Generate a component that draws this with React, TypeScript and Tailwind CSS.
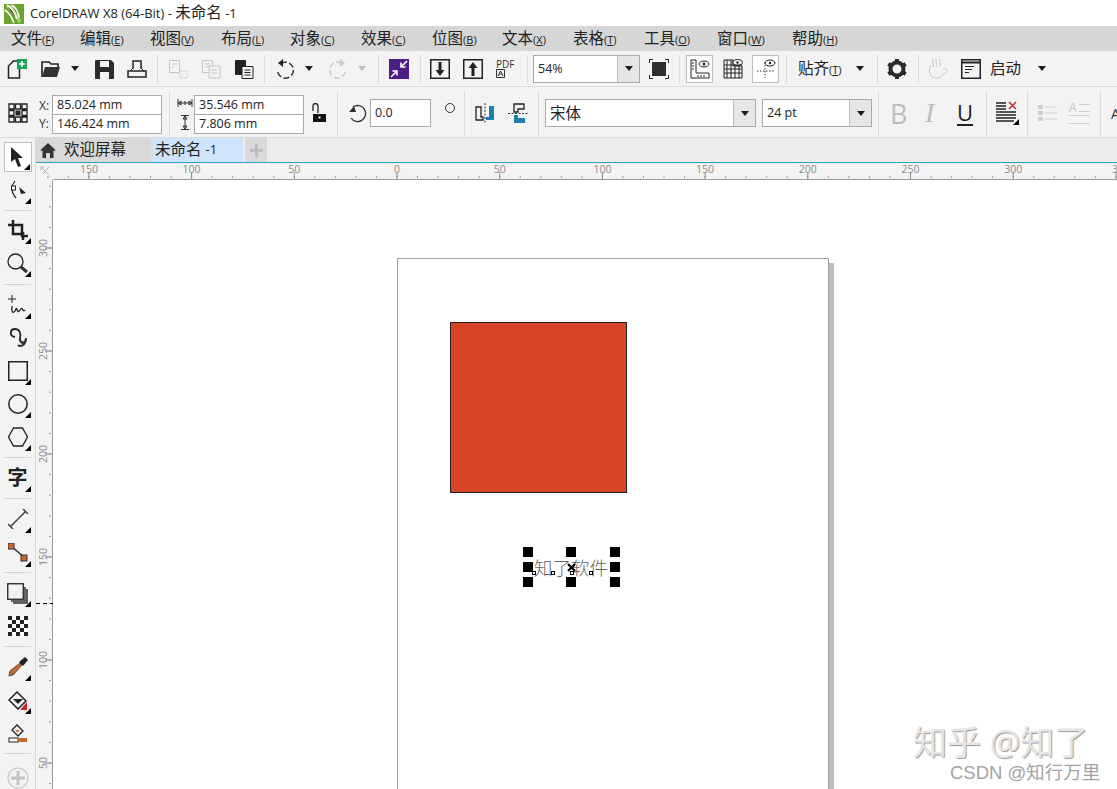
import type { ReactNode } from 'react'

const CJK = 'font-["Open_Sans","Noto_Sans_CJK_SC",sans-serif]'

function Sep({ className }: { className: string }) {
  return <div className={`w-px shrink-0 bg-[#dcdcdc] ${className}`} />
}

function Arrow({ className, gray }: { className: string; gray?: boolean }) {
  return (
    <svg viewBox="0 0 8 5" className={`h-[5px] w-[8px] shrink-0 ${className}`}>
      <path d="M0 0h8L4 5z" fill={gray ? '#bdbdbd' : '#1c1c1c'} />
    </svg>
  )
}

function Icon({ className = '', w = 20, h = 20, children }: { className?: string; w?: number; h?: number; children: ReactNode }) {
  return (
    <svg width={w} height={h} viewBox={`0 0 ${w} ${h}`} fill="none" className={`shrink-0 ${className}`}>
      {children}
    </svg>
  )
}

function Combo({ className, text, textClass }: { className: string; text: string; textClass: string }) {
  return (
    <div className={`flex h-[28px] shrink-0 border border-[#a9a9a9] bg-white ${className}`}>
      <div className={`flex-1 pl-[4px] leading-[26px] text-[#222] ${textClass}`}>{text}</div>
      <div className="flex w-[22px] items-center justify-center border-l border-[#bdbdbd] bg-[#e6e6e6]">
        <Arrow className="" />
      </div>
    </div>
  )
}

function Tool({ className, corner = true, children }: { className: string; corner?: boolean; children: ReactNode }) {
  return (
    <div className={`relative mx-auto flex h-[30px] w-[28px] shrink-0 items-center justify-center ${className}`}>
      {children}
      {corner && (
        <svg viewBox="0 0 6 6" className="absolute bottom-[1px] right-[1px] h-[6px] w-[6px]">
          <path d="M6 0v6H0z" fill="#000" />
        </svg>
      )}
    </div>
  )
}

function ToolSep({ className }: { className: string }) {
  return <div className={`mx-[4px] h-px shrink-0 bg-[#d4d4d4] ${className}`} />
}

const menus: [string, string, string][] = [
  ['文件', 'F', 'w-[80px] pl-[11px]'],
  ['编辑', 'E', 'w-[70px]'],
  ['视图', 'V', 'w-[71px]'],
  ['布局', 'L', 'w-[69px]'],
  ['对象', 'C', 'w-[71px]'],
  ['效果', 'C', 'w-[71px]'],
  ['位图', 'B', 'w-[70px]'],
  ['文本', 'X', 'w-[71px]'],
  ['表格', 'T', 'w-[71px]'],
  ['工具', 'O', 'w-[73px]'],
  ['窗口', 'W', 'w-[75px]'],
  ['帮助', 'H', 'w-[60px]'],
]

function HRuler() {
  const px = (i: number) => 397 - 36 + i * 20.54
  const labels = [
    [-15, '150'], [-10, '100'], [-5, '50'], [0, '0'], [5, '50'], [10, '100'], [15, '150'], [20, '200'], [25, '250'], [30, '300'], [35, '35'],
  ] as [number, string][]
  const dots = Array.from({ length: 60 }, (_, i) => i - 18)
  return (
    <svg width={1081} height={17} className="block shrink-0">
      <path d="M17 16.5H1081" stroke="#9c9c9c" />
      <path d="M5 4l8 8M5 4h3M5 4v3M13 4l-6 7" stroke="#b0b0b0" />
      {dots.map((i) => (
        <path key={i} d={`M${px(i)} 13v2`} stroke="#9a9a9a" />
      ))}
      {labels.map(([i, t]) => (
        <g key={t + i}>
          <path d={`M${px(i)} 9v7`} stroke="#8a8a8a" />
          <text x={px(i) + (t === '35' ? 2 : 0)} y={10} textAnchor="middle" fontSize="10.5" fill="#8c8c8c" fontFamily="Open Sans, sans-serif">{t}</text>
        </g>
      ))}
    </svg>
  )
}

function VRuler() {
  const py = (i: number) => 248 - 180 + i * 20.6
  const labels = [[0, '300'], [5, '250'], [10, '200'], [15, '150'], [20, '100'], [25, '50']] as [number, string][]
  const dots = Array.from({ length: 32 }, (_, i) => i - 3)
  return (
    <svg width={17} height={609} className="block shrink-0">
      <path d="M16.5 0V609" stroke="#9c9c9c" />
      {dots.map((i) => (
        <path key={i} d={`M13 ${py(i)}h2`} stroke="#9a9a9a" />
      ))}
      {labels.map(([i, t]) => (
        <g key={t}>
          <path d={`M9 ${py(i)}h7`} stroke="#8a8a8a" />
          <text transform={`translate(11 ${py(i)}) rotate(-90)`} textAnchor="middle" fontSize="10.5" fill="#8c8c8c" fontFamily="Open Sans, sans-serif">{t}</text>
        </g>
      ))}
      <path d="M0 423.5H17" stroke="#000" strokeDasharray="4 3" />
    </svg>
  )
}

function Handle({ className }: { className: string }) {
  return <div className={`absolute h-[10px] w-[10px] bg-black ${className}`} />
}

function Node({ className }: { className: string }) {
  return <div className={`absolute h-[4px] w-[4px] border border-black bg-white ${className}`} />
}

export default function App() {
  return (
    <div className={`flex h-[789px] w-[1117px] flex-col overflow-hidden bg-white ${CJK}`}>
      {/* title bar */}
      <div className="flex h-[26px] shrink-0 items-center bg-white">
        <svg width="20" height="20" viewBox="0 0 20 20" className="ml-[4px] mt-[1px]">
          <rect width="20" height="20" fill="#6aa52d" />
          <path d="M1 3c5 1 9 6 12 13l1 3 3-1c-1-8-6-14-10-17z" fill="#a9cf6a" />
          <path d="M3 1c5 3 8 8 10 14M8 1c4 3 6 7 7 12M1 6c4 3 7 8 9 13" stroke="#fff" strokeWidth="1.6" />
        </svg>
        <span className="ml-[6px] whitespace-nowrap text-[13px] text-[#222]">
          CorelDRAW X8 (64-Bit) - <span className="text-[15.5px]">未命名</span> -1
        </span>
      </div>

      {/* menu bar */}
      <div className="flex h-[25px] shrink-0 items-center bg-[#d6d6d6] text-[#222]">
        {menus.map(([label, key, w]) => (
          <div key={label} className={`shrink-0 whitespace-nowrap text-[15.5px] leading-[25px] ${w}`}>
            {label}
            <span className="text-[11px]">(<span className="underline">{key}</span>)</span>
          </div>
        ))}
      </div>

      {/* standard toolbar */}
      <div className="flex h-[36px] shrink-0 items-center border-b border-[#dcdcdc] bg-[#f3f3f3]">
        <Icon className="ml-[7px]" w={21}>
          <path d="M1.5 19V7l5-5h6v17z" stroke="#222" strokeWidth="1.5" />
          <rect x="10" y="0" width="10" height="10" fill="#1fa05a" />
          <path d="M15 2v6M12 5h6" stroke="#fff" strokeWidth="1.6" />
        </Icon>
        <Icon className="ml-[13px]">
          <path d="M1 18V3h7l2 2h7v3" stroke="#222" strokeWidth="1.6" />
          <path d="M1 18l3-10h15l-3 10z" fill="#333" />
        </Icon>
        <Arrow className="ml-[10px]" />
        <Icon className="ml-[15px]" w={21}>
          <path d="M1 2a1 1 0 0 1 1-1h15l3 3v15a1 1 0 0 1-1 1H2a1 1 0 0 1-1-1z" fill="#2b2b2b" />
          <rect x="6" y="2" width="9" height="6" fill="#f3f3f3" />
          <rect x="6" y="13" width="9" height="7" fill="#f3f3f3" />
        </Icon>
        <Icon className="ml-[12px]">
          <path d="M6 10V2h8v8M1 12h18v6H1z" stroke="#222" strokeWidth="1.5" />
          <path d="M3 12l3-3M17 12l-3-3" stroke="#222" />
        </Icon>
        <Sep className="ml-[10px] h-[28px]" />
        <Icon className="ml-[10px]">
          <path d="M1.5 1.5h10v12h-10zM4 5h5M4 8h2" stroke="#c4c4c4" />
          <path d="M12 12h7v7h-7z" stroke="#c4c4c4" strokeDasharray="2 1" />
        </Icon>
        <Icon className="ml-[13px]">
          <path d="M1.5 1.5h10v12h-10zM4 5h5M4 8h5" stroke="#c4c4c4" />
          <path d="M8 7h11v12H8zM10.5 11h6M10.5 14h6" stroke="#c4c4c4" fill="#f3f3f3" />
        </Icon>
        <Icon className="ml-[13px]">
          <rect x="1" y="1" width="11" height="15" rx="1" fill="#222" />
          <path d="M8 7.5h11v12H8z" fill="#f3f3f3" stroke="#222" />
          <path d="M10.5 11h6M10.5 13.5h6M10.5 16h6" stroke="#222" />
        </Icon>
        <Sep className="ml-[10px] h-[28px]" />
        <Icon className="ml-[10px]">
          <path d="M6 4.5a8 8 0 1 1-3.5 8" stroke="#333" strokeWidth="1.5" strokeDasharray="6 2.5" />
          <path d="M8 0v8L3 4z" fill="#222" />
        </Icon>
        <Arrow className="ml-[10px]" />
        <Icon className="ml-[15px]">
          <path d="M14 4.5a8 8 0 1 0 3.5 8" stroke="#c8c8c8" strokeWidth="1.5" strokeDasharray="6 2.5" />
          <path d="M12 0v8l5-4z" fill="#c8c8c8" />
        </Icon>
        <Arrow gray className="ml-[10px]" />
        <Sep className="ml-[12px] h-[28px]" />
        <Icon className="ml-[10px]">
          <rect width="20" height="20" fill="#4b1d85" />
          <path d="M18 2l-6 6M12 3.5V8h4.5M2 18l6-6M3.5 12H8v4.5" stroke="#fff" strokeWidth="1.6" />
        </Icon>
        <Sep className="ml-[11px] h-[28px]" />
        <Icon className="ml-[9px]">
          <rect x=".75" y=".75" width="18.5" height="18.5" stroke="#222" strokeWidth="1.5" />
          <path d="M10 3v9" stroke="#222" strokeWidth="3" />
          <path d="M5.5 11h9L10 17z" fill="#222" />
        </Icon>
        <Icon className="ml-[13px]">
          <rect x=".75" y=".75" width="18.5" height="18.5" stroke="#222" strokeWidth="1.5" />
          <path d="M10 17V8" stroke="#222" strokeWidth="3" />
          <path d="M5.5 9h9L10 3z" fill="#222" />
        </Icon>
        <div className="ml-[13px] flex w-[20px] shrink-0 flex-col text-[10px] leading-[10px] text-[#333]">
          <span>PDF</span>
          <svg width="9" height="9" viewBox="0 0 9 9"><path d="M.5.5h8v8h-8zM2 7l2.5-5L7 7M3 5h3" stroke="#333" fill="none" /></svg>
        </div>
        <Sep className="ml-[11px] h-[28px]" />
        <Combo className="ml-[5px] w-[107px]" text="54%" textClass="text-[12.5px]" />
        <Icon className="ml-[9px]">
          <rect x="3" y="3" width="14" height="14" fill="#2d2d2d" />
          <path d="M.5 4V.5H4M16 .5h3.5V4M19.5 16v3.5H16M4 19.5H.5V16" stroke="#222" />
        </Icon>
        <Sep className="ml-[10px] h-[28px]" />
        <div className="ml-[6px] flex h-[28px] w-[27px] shrink-0 items-center justify-center border border-[#bdbdbd] bg-white">
          <Icon>
            <path d="M1 1h5v13h13v5H1zM2 4h2M2 7h2M2 10h2M8 16v2M11 16v2M14 16v2" stroke="#222" />
            <ellipse cx="14" cy="5" rx="5" ry="3" stroke="#222" />
            <circle cx="14" cy="5" r="1.5" fill="#222" />
          </Icon>
        </div>
        <Icon className="ml-[10px]">
          <path d="M1 1h9v6h9v12H1zM1 6h18M1 10h18M1 14h18M4 1v18M8 1v18M12 7v12M16 7v12" stroke="#222" />
          <ellipse cx="14.500" cy="3.500" rx="5" ry="3" stroke="#222" />
          <circle cx="14.500" cy="3.500" r="1.200" fill="#222" />
        </Icon>
        <div className="ml-[9px] flex h-[28px] w-[27px] shrink-0 items-center justify-center border border-[#bdbdbd] bg-white">
          <Icon>
            <path d="M9 3v16M1 12h17" stroke="#333" strokeDasharray="1.500 1.500" />
            <ellipse cx="14" cy="4" rx="5" ry="3" stroke="#222" />
            <circle cx="14" cy="4" r="1.200" fill="#222" />
          </Icon>
        </div>
        <Sep className="ml-[7px] h-[28px]" />
        <span className="ml-[11px] w-[47px] shrink-0 whitespace-nowrap text-[15.5px] text-[#222]">
          贴齐<span className="text-[11px]">(<span className="underline">T</span>)</span>
        </span>
        <Arrow className="ml-[11px]" />
        <Sep className="ml-[13px] h-[28px]" />
        <Icon className="ml-[9px]">
          <path d="M10 3.500a6.500 6.500 0 1 0 0 13 6.500 6.500 0 0 0 0-13z" stroke="#2b2b2b" strokeWidth="4" />
          <path d="M10 0v4M10 16v4M1.300 5l3.500 2M15.200 13l3.500 2M1.300 15l3.500-2M15.200 7l3.500-2" stroke="#2b2b2b" strokeWidth="4" />
        </Icon>
        <Sep className="ml-[11px] h-[28px]" />
        <Icon className="ml-[9px]">
          <path d="M5 0c-2 3 2 5 0 8M8.500 0c-2 3 2 5 0 8M12 0c-2 3 2 5 0 8M3 6c-3 5-2 13 6 13 3 0 5-2 6-4M15 10c3-1 5 1 4 3s-3 2-4 2" stroke="#c8c8c8" />
        </Icon>
        <Icon className="ml-[13px]">
          <rect x=".75" y=".75" width="18.500" height="18.500" stroke="#222" strokeWidth="1.500" />
          <path d="M1 3.500h18" stroke="#222" strokeWidth="2" />
          <path d="M4 7.500h9M4 10.500h7M4 13.500h4" stroke="#222" />
        </Icon>
        <span className="ml-[9px] w-[32px] shrink-0 whitespace-nowrap text-[15.5px] text-[#222]">启动</span>
        <Arrow className="ml-[16px]" />
      </div>

      {/* property bar */}
      <div className="flex h-[51px] shrink-0 items-center border-b border-[#dcdcdc] bg-[#f3f3f3] pt-[2px]">
        <Icon className="ml-[8px]">
          <path d="M1 1h5v5H1zM7.500 1h5v5h-5zM14 1h5v5h-5zM1 7.500h5v5H1zM14 7.500h5v5h-5zM1 14h5v5H1zM7.500 14h5v5h-5zM14 14h5v5h-5z" stroke="#222" strokeWidth="1.300" />
          <rect x="7.500" y="7.500" width="5" height="5" fill="#222" />
        </Icon>
        <div className="ml-[11px] mt-[3px] flex w-[13px] shrink-0 flex-col text-[12px] leading-[18px] text-[#333]">
          <span>X:</span>
          <span>Y:</span>
        </div>
        <div className="mt-[3px] w-[110px] shrink-0 border border-[#a9a9a9] bg-white pl-[4px] text-[12.5px] leading-[18px] text-[#222]">
          <div className="-ml-[4px] border-b border-[#a9a9a9] pl-[4px]">85.024 mm</div>
          <div>146.424 mm</div>
        </div>
        <Sep className="ml-[7px] h-[45px]" />
        <div className="ml-[7px] mt-[3px] flex w-[16px] shrink-0 flex-col items-center gap-[7px]">
          <Icon w={16} h={9}>
            <path d="M1 0v8M15 0v8M1 4h14M1 4l3-2v4zM15 4l-3-2v4zM8 2v4" stroke="#333" />
          </Icon>
          <Icon w={10} h={15}>
            <path d="M1 .5h8M1 14.500h8M5 1v13M5 1L3 4h4zM5 14L3 11h4z" stroke="#333" />
          </Icon>
        </div>
        <div className="ml-[1px] mt-[3px] w-[110px] shrink-0 border border-[#a9a9a9] bg-white pl-[4px] text-[12.5px] leading-[18px] text-[#222]">
          <div className="-ml-[4px] border-b border-[#a9a9a9] pl-[4px]">35.546 mm</div>
          <div>7.806 mm</div>
        </div>
        <Icon className="ml-[8px]" w={14} h={20}>
          <path d="M1 8V3a2.500 2.500 0 0 1 5 0v7" stroke="#222" strokeWidth="1.300" />
          <rect x="1" y="11" width="13" height="8" fill="#111" />
          <rect x="6.500" y="13.500" width="2" height="2" fill="#fff" />
        </Icon>
        <Sep className="ml-[11px] h-[45px]" />
        <Icon className="ml-[10px]" w={19} h={20}>
          <path d="M5 4a8 8 0 1 1-2 11" stroke="#333" strokeWidth="1.300" />
          <path d="M1 9h7L6 3z" fill="#333" />
        </Icon>
        <div className="ml-[3px] h-[28px] w-[61px] shrink-0 border border-[#a9a9a9] bg-white pl-[4px] text-[12.5px] leading-[26px] text-[#222]">
          0.0
        </div>
        <div className="ml-[14px] -mt-[11px] h-[10px] w-[10px] shrink-0 rounded-full border border-[#333]" />
        <Sep className="ml-[9px] h-[45px]" />
        <Icon className="ml-[10px]">
          <path d="M1 4h5v10h2v3H1z" stroke="#222" strokeWidth="1.300" />
          <path d="M19 3h-5v11h-3v3h8z" fill="#1f7fb0" />
          <path d="M10 0v20" stroke="#333" strokeDasharray="2 1.500" />
        </Icon>
        <Icon className="ml-[13px]">
          <path d="M6 1h10v5h-6v3H6z" stroke="#222" strokeWidth="1.300" />
          <path d="M6 12h4v3h7v5H6z" fill="#1f7fb0" />
          <path d="M0 10.500h20" stroke="#333" strokeDasharray="2 1.500" />
        </Icon>
        <Sep className="ml-[10px] h-[45px]" />
        <Combo className="ml-[6px] w-[211px]" text="宋体" textClass="text-[15.5px]" />
        <Combo className="ml-[6px] w-[110px]" text="24 pt" textClass="text-[12.5px]" />
        <Sep className="ml-[6px] h-[45px]" />
        <span className="ml-[11px] w-[16px] shrink-0 text-[27px] leading-none text-[#bdbdbd]">B</span>
        <span className="ml-[19px] w-[15px] shrink-0 font-['Liberation_Serif',serif] text-[28px] italic leading-none text-[#bdbdbd]">I</span>
        <div className="ml-[17px] w-[16px] shrink-0 border-b-2 border-[#222] text-center text-[22px] leading-[23px] text-[#222]">U</div>
        <Sep className="ml-[13px] h-[45px]" />
        <Icon className="ml-[9px]" w={23} h={24}>
          <path d="M0 2h10M0 5h10M0 8h10M0 11h20M0 14h20M0 17h20M0 20h18" stroke="#222" strokeWidth="1.500" />
          <path d="M13 1l7 7M20 1l-7 7" stroke="#d12a2a" strokeWidth="1.500" />
          <path d="M23 18v6h-6z" fill="#000" />
        </Icon>
        <Sep className="ml-[8px] h-[45px]" />
        <Icon className="ml-[9px]">
          <path d="M1 2h5v4H1zM1 8h5v4H1zM1 14h5v4H1z" fill="#d0d0d0" />
          <path d="M8 4h12M8 10h12M8 16h12" stroke="#d0d0d0" />
        </Icon>
        <div className="ml-[12px] flex w-[21px] shrink-0 flex-col gap-[2px]">
          <div className="flex items-center gap-[2px] text-[12px] leading-[11px] text-[#c8c8c8]">
            A
            <div className="h-[8px] flex-1 border-y border-[#d0d0d0]" />
          </div>
          <div className="h-[9px] border-y border-[#d0d0d0]" />
        </div>
        <Sep className="ml-[10px] h-[45px]" />
        <span className="ml-[10px] text-[14px] text-[#333]">A</span>
      </div>

      {/* work area */}
      <div className="flex min-h-0 flex-1">
        <aside className="flex w-[36px] shrink-0 flex-col border-r border-[#d8d8d8] bg-[#f3f3f3]">
          <Tool className="mt-[4px] border border-[#bdbdbd] bg-white">
            <Icon w={15} h={22}>
              <path d="M1 1l12 11H8l3 8-3 1-3-8-4 3z" fill="#222" />
            </Icon>
          </Tool>
          <Tool className="mt-[3px]">
            <Icon>
              <path d="M7 1c-4 5-4 11 1 17" stroke="#222" strokeWidth="1.200" />
              <rect x="3.500" y="6" width="4" height="4" fill="#fff" stroke="#222" />
              <path d="M11 7l7 6-5 1z" fill="#222" />
            </Icon>
          </Tool>
          <ToolSep className="mt-[5px]" />
          <Tool className="mt-[4px]">
            <Icon>
              <path d="M0 5h14v11h6M5 0v5M5 5v9h11M15 12v8" stroke="#222" strokeWidth="2.500" />
            </Icon>
          </Tool>
          <Tool className="mt-[3px]">
            <Icon w={21} h={21}>
              <circle cx="8.500" cy="8.500" r="7.500" stroke="#222" strokeWidth="1.300" />
              <path d="M14 14l6 5" stroke="#333" strokeWidth="3" />
            </Icon>
          </Tool>
          <ToolSep className="mt-[6px]" />
          <Tool className="mt-[5px]">
            <Icon w={22} h={22}>
              <path d="M5 1v8M1 5h8" stroke="#222" />
              <path d="M5 12c-1 10 3 6 4 3s1 6 4 1 2 3 5 0" stroke="#222" strokeWidth="1.300" />
            </Icon>
          </Tool>
          <Tool className="mt-[3px]" corner={false}>
            <Icon>
              <path d="M7 9C1 8 2 1 7 1s6 5 5 9c-1 5 6 7 6 0" stroke="#222" strokeWidth="1.800" />
              <path d="M12 10c-1 5 6 8 6 1-1 7-6 8-8 6" stroke="#333" strokeWidth="2" />
            </Icon>
          </Tool>
          <Tool className="mt-[3px]">
            <Icon>
              <rect x=".75" y=".75" width="18.500" height="18.500" stroke="#222" strokeWidth="1.500" />
            </Icon>
          </Tool>
          <Tool className="mt-[3px]">
            <Icon>
              <circle cx="10" cy="10" r="9.200" stroke="#222" strokeWidth="1.500" />
            </Icon>
          </Tool>
          <Tool className="mt-[3px]">
            <Icon>
              <path d="M5.500 1h9l5 9-5 9h-9l-5-9z" stroke="#222" strokeWidth="1.300" />
            </Icon>
          </Tool>
          <ToolSep className="mt-[5px]" />
          <Tool className="mt-[5px] text-[20px] font-bold text-[#222]">字</Tool>
          <ToolSep className="mt-[5px]" />
          <Tool className="mt-[5px]">
            <Icon>
              <path d="M2 18L18 2M0 15l5 5M15 0l5 5" stroke="#333" strokeWidth="1.300" />
            </Icon>
          </Tool>
          <Tool className="mt-[4px]">
            <Icon>
              <path d="M3 3l14 12" stroke="#222" strokeWidth="1.300" />
              <rect x="0" y="0" width="6" height="6" fill="#c4692f" stroke="#333" />
              <rect x="13" y="12" width="6" height="6" fill="#c4692f" stroke="#333" />
            </Icon>
          </Tool>
          <ToolSep className="mt-[4px]" />
          <Tool className="mt-[5px]">
            <Icon w={21} h={21}>
              <rect x=".75" y=".75" width="15.500" height="15.500" stroke="#222" strokeWidth="1.300" />
              <path d="M18 4v14H4M20 6v14H6" stroke="#333" strokeWidth="1.500" />
            </Icon>
          </Tool>
          <Tool className="mt-[3px]" corner={false}>
            <Icon>
              <rect width="20" height="20" fill="#222" />
              <path d="M4 0h4v4H4zM12 0h4v4h-4zM0 4h4v4H0zM8 4h4v4H8zM16 4h4v4h-4zM4 8h4v4H4zM12 8h4v4h-4zM0 12h4v4H0zM8 12h4v4H8zM16 12h4v4h-4zM4 16h4v4H4zM12 16h4v4h-4z" fill="#fff" />
            </Icon>
          </Tool>
          <ToolSep className="mt-[5px]" />
          <Tool className="mt-[5px]">
            <Icon>
              <path d="M1 19l1-5L12 6l2 2L5 18z" fill="#c4692f" stroke="#333" strokeWidth=".8" />
              <path d="M11 5l6-5 3 3-5 6z" fill="#222" />
            </Icon>
          </Tool>
          <Tool className="mt-[3px]">
            <Icon>
              <path d="M1 10l8-8 9 9-8 8z" stroke="#222" strokeWidth="1.500" />
              <path d="M5 9h10l-5 5z" fill="#222" />
              <path d="M19 12v8h-7z" fill="#d0202a" />
            </Icon>
          </Tool>
          <Tool className="mt-[3px]" corner={false}>
            <Icon>
              <path d="M4 7l5-5 6 6-5 5z" stroke="#222" strokeWidth="1.300" />
              <path d="M7 7h5l-2.500 2.500z" fill="#c4692f" />
              <rect x="1" y="15" width="9" height="4" fill="#fff" stroke="#222" />
              <rect x="10" y="15" width="9" height="4" fill="#c4692f" />
            </Icon>
          </Tool>
          <ToolSep className="mt-[5px]" />
          <Tool className="mt-[9px]" corner={false}>
            <Icon w={22} h={22}>
              <circle cx="11" cy="11" r="10" stroke="#c4c4c4" strokeWidth="1.200" />
              <path d="M11 4v14M4 11h14" stroke="#c4c4c4" strokeWidth="3" />
            </Icon>
          </Tool>
        </aside>

        <div className="flex min-w-0 flex-1 flex-col">
          {/* tabs */}
          <div className="flex h-[25px] shrink-0 border-b border-[#2fa3bd] bg-[#ececec]">
            <div className="flex w-[115px] items-center bg-[#d9d9d9] pl-[4px] text-[15.5px] text-[#222]">
              <svg width="16" height="15" viewBox="0 0 16 15">
                <path d="M8 0l8 7.500h-2.500V15H10v-5H6v5H2.500V7.500H0z" fill="#333" />
              </svg>
              <span className="ml-[8px]">欢迎屏幕</span>
            </div>
            <div className="flex w-[92px] items-center bg-[#cde4fb] pl-[4px] text-[15.5px] text-[#222]">
              未命名 <span className="ml-[4px] text-[13px]">-1</span>
            </div>
            <div className="ml-[2px] flex w-[22px] items-center justify-center bg-[#d9d9d9]">
              <svg width="13" height="13" viewBox="0 0 13 13"><path d="M6.500 0v13M0 6.500h13" stroke="#bcbcbc" strokeWidth="3" /></svg>
            </div>
          </div>

          {/* ruler */}
          <div className="h-[17px] shrink-0 bg-[#f3f3f3]">
            <HRuler />
          </div>

          <div className="flex min-h-0 flex-1">
            <div className="w-[17px] shrink-0 bg-[#f3f3f3]">
              <VRuler />
            </div>

            {/* drawing page: free canvas */}
            <div className="relative min-w-0 flex-1 overflow-hidden bg-white">
              <div className="absolute left-[349px] top-[83px] h-[700px] w-[432px] bg-[#bcbcbc]" />
              <div className="absolute left-[344px] top-[78px] h-[700px] w-[432px] border border-[#a0a0a0] bg-white" />
              <div className="absolute left-[397px] top-[142px] h-[171px] w-[177px] border border-[#222] bg-[#d64525]" />

              <div className="absolute left-[481px] top-[378px] whitespace-nowrap font-['Liberation_Serif','Noto_Sans_CJK_SC',serif] text-[18.500px] font-light leading-[22px] text-[#666]">
                知了软件
              </div>
              <Handle className="left-[470px] top-[367px]" />
              <Handle className="left-[513px] top-[367px]" />
              <Handle className="left-[557px] top-[367px]" />
              <Handle className="left-[470px] top-[382px]" />
              <Handle className="left-[557px] top-[382px]" />
              <Handle className="left-[470px] top-[397px]" />
              <Handle className="left-[513px] top-[397px]" />
              <Handle className="left-[557px] top-[397px]" />
              <svg width="9" height="9" viewBox="0 0 9 9" className="absolute left-[514px] top-[383px]">
                <path d="M1 1l7 7M8 1L1 8" stroke="#000" strokeWidth="2.200" />
              </svg>
              <Node className="left-[479px] top-[391px]" />
              <Node className="left-[498px] top-[391px]" />
              <Node className="left-[517px] top-[391px]" />
              <Node className="left-[536px] top-[391px]" />

              <div className="absolute left-[860px] top-[547px] whitespace-nowrap text-[34px] leading-[30px] text-[#e6e6e6] [text-shadow:1px_1px_1px_#9a9a9a]">
                知乎 @知了
              </div>
              <div className="absolute left-[897px] top-[584px] whitespace-nowrap font-['Liberation_Sans','Noto_Sans_CJK_SC',sans-serif] text-[18.500px] leading-[18px] text-[#a3a3a3]">
                CSDN @知行万里
              </div>
            </div>
          </div>
        </div>
      </div>
    </div>
  )
}
